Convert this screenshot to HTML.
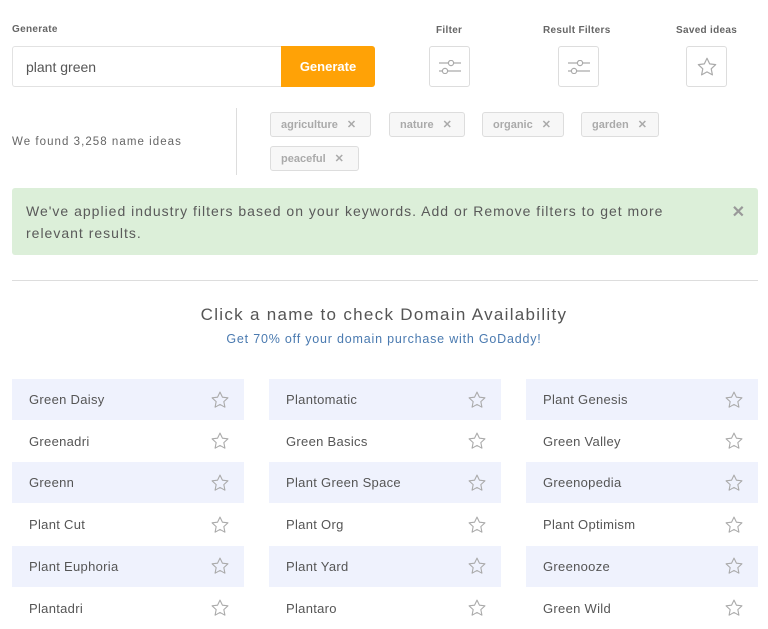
<!DOCTYPE html>
<html><head><style>
*{box-sizing:border-box;margin:0;padding:0}
body{width:768px;height:627px;background:#fff;font-family:"Liberation Sans",sans-serif;color:#555;position:relative;overflow:hidden}
.a{position:absolute}
.lbl{font-size:10px;font-weight:bold;color:#666;letter-spacing:.3px}
.ib{border:1px solid #ddd;border-radius:3px;width:41px;height:41px;display:flex;align-items:center;justify-content:center}
.tag{position:absolute;height:25px;border:1px solid #ddd;border-radius:3px;background:#f7f7f7;font-size:11px;font-weight:bold;color:#aaa;display:flex;align-items:center;padding-left:10px;gap:9px}
.row{position:absolute;width:232px;height:41px;display:flex;align-items:center;justify-content:space-between;padding:0 14px 0 17px;font-size:13px;color:#555;letter-spacing:.3px}
.row.b{background:#eff2fd}
</style></head><body>
<div class="a lbl" style="left:12px;top:24px">Generate</div>
<div class="a" style="left:12px;top:46px;width:270px;height:41px;border:1px solid #e2e2e2;border-right:none;border-radius:3px 0 0 3px;font-size:14px;color:#555;padding:12px 0 0 13px">plant green</div>
<div class="a" style="left:281px;top:46px;width:94px;height:41px;background:#ffa206;border-radius:0 3px 3px 0;color:#fff;font-size:13px;font-weight:bold;text-align:center;line-height:41px">Generate</div>
<div class="a lbl" style="left:436px;top:25px">Filter</div>
<div class="a lbl" style="left:543px;top:25px">Result Filters</div>
<div class="a lbl" style="left:676px;top:25px">Saved ideas</div>
<svg width="0" height="0" style="position:absolute"><defs>
<symbol id="sl" viewBox="0 0 22 14"><g fill="none" stroke="#aaa" stroke-width="1.2"><path d="M0 3h22M0 11h22"/><circle cx="12" cy="3" r="2.6" fill="#fff"/><circle cx="6" cy="11" r="2.6" fill="#fff"/></g></symbol>
<symbol id="st" viewBox="0 0 24 24"><path d="M12 2.5l2.9 6.1 6.6.8-4.9 4.6 1.3 6.6L12 17.3l-5.9 3.3 1.3-6.6-4.9-4.6 6.6-.8z" fill="none" stroke="#aaa" stroke-width="1.3" stroke-linejoin="round"/></symbol>
</defs></svg>
<div class="a ib" style="left:429px;top:46px"><svg width="22" height="14"><use href="#sl"/></svg></div>
<div class="a ib" style="left:558px;top:46px"><svg width="22" height="14"><use href="#sl"/></svg></div>
<div class="a ib" style="left:686px;top:46px"><svg width="22" height="22"><use href="#st"/></svg></div>
<div class="a" style="left:12px;top:136px;font-size:11.5px;color:#666;letter-spacing:1.05px">We found 3,258 name ideas</div>
<div class="a" style="left:236px;top:108px;width:1px;height:67px;background:#ddd"></div>
<div class="tag" style="left:270px;top:112px;width:101px">agriculture <span>✕</span></div>
<div class="tag" style="left:389px;top:112px;width:76px">nature <span>✕</span></div>
<div class="tag" style="left:482px;top:112px;width:82px">organic <span>✕</span></div>
<div class="tag" style="left:581px;top:112px;width:78px">garden <span>✕</span></div>
<div class="tag" style="left:270px;top:146px;width:89px">peaceful <span>✕</span></div>
<div class="a" style="left:12px;top:188px;width:746px;height:67px;background:#dcefd9;border-radius:3px"><div style="position:absolute;left:14px;top:12px;width:680px;font-size:14px;line-height:22px;color:#5a5a5a;letter-spacing:1px">We've applied industry filters based on your keywords. Add or Remove filters to get more relevant results.</div><span style="position:absolute;right:13px;top:14px;color:#999;font-weight:bold">✕</span></div>
<div class="a" style="left:12px;top:280px;width:746px;height:1px;background:#ddd"></div>
<div class="a" style="left:0;width:768px;top:305px;text-align:center;font-size:17px;color:#555;letter-spacing:1.3px">Click a name to check Domain Availability</div>
<div class="a" style="left:0;width:768px;top:332px;text-align:center;font-size:12.5px;color:#4a7ab0;letter-spacing:.8px">Get 70% off your domain purchase with GoDaddy!</div>
<div id="g"></div>
<script>
var n=[["Green Daisy","Plantomatic","Plant Genesis"],["Greenadri","Green Basics","Green Valley"],["Greenn","Plant Green Space","Greenopedia"],["Plant Cut","Plant Org","Plant Optimism"],["Plant Euphoria","Plant Yard","Greenooze"],["Plantadri","Plantaro","Green Wild"]];
var h="",xs=[12,269,526];
n.forEach(function(r,i){r.forEach(function(t,j){h+='<div class="row'+(i%2?'':' b')+'" style="left:'+xs[j]+'px;top:'+(379+i*41.7)+'px"><span>'+t+'</span><svg width="20" height="20"><use href="#st"/></svg></div>';});});
document.getElementById('g').innerHTML=h;
</script>
</body></html>
